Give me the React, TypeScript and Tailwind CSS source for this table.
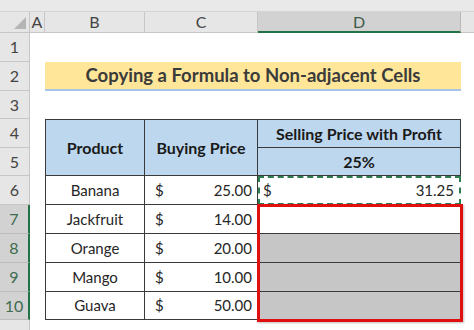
import React from "react";

const font = { fontFamily: "Lato, 'Noto Sans', sans-serif" };

const rows = [
  { name: "Banana", price: "25.00" },
  { name: "Jackfruit", price: "14.00" },
  { name: "Orange", price: "20.00" },
  { name: "Mango", price: "10.00" },
  { name: "Guava", price: "50.00" },
];

const rowStarts = [
  "row-start-3",
  "row-start-4",
  "row-start-5",
  "row-start-6",
  "row-start-7",
  "row-start-8",
  "row-start-9",
  "row-start-10",
  "row-start-11",
  "row-start-12",
];

const dataRowStarts = ["row-start-8", "row-start-9", "row-start-10", "row-start-11", "row-start-12"];

export default function App() {
  return (
    <div
      className="w-[474px] h-[330px] overflow-hidden bg-white text-[#262626] grid grid-cols-[30px_15px_100px_113px_203px_1fr] grid-rows-[12px_21px_29px_29px_28px_29px_28px_29px_29px_29px_29px_28px_1fr]"
      style={font}
    >
      {/* top strip */}
      <div className="col-span-6 row-start-1 bg-[#e9e9e9] border-b border-[#d4d4d4]" />

      {/* corner */}
      <div className="col-start-1 row-start-2 bg-[#e6e6e6] border-r border-b border-[#c6c6c6] flex items-end justify-end p-[3px]">
        <svg width="12" height="12" viewBox="0 0 12 12">
          <polygon points="12,0 12,12 0,12" fill="#b5b5b5" />
        </svg>
      </div>

      {/* column headers */}
      <div className="col-start-2 row-start-2 bg-[#e6e6e6] border-r border-b border-[#c6c6c6] flex items-center justify-center text-[16px] text-[#444]">A</div>
      <div className="col-start-3 row-start-2 bg-[#e6e6e6] border-r border-b border-[#c6c6c6] flex items-center justify-center text-[16px] text-[#444]">B</div>
      <div className="col-start-4 row-start-2 bg-[#e6e6e6] border-r border-b border-[#c6c6c6] flex items-center justify-center text-[16px] text-[#444]">C</div>
      <div className="col-start-5 row-start-2 bg-[#d2d2d2] border-r border-[#b8b8b8] border-b-2 border-b-[#217346] flex items-center justify-center text-[16px] text-[#3d5a48]">D</div>
      <div className="col-start-6 row-start-2 bg-[#e6e6e6] border-b border-[#c6c6c6]" />

      {/* row headers */}
      {rowStarts.map((r, i) => {
        const sel = i >= 6;
        return (
          <div
            key={r}
            className={`col-start-1 ${r} flex items-center justify-center text-[16px] border-b ${
              sel
                ? "bg-[#d2d2d2] text-[#3d6b4f] border-[#bcbcbc] border-r-2 border-r-[#217346]"
                : "bg-[#e6e6e6] text-[#444] border-[#c6c6c6] border-r"
            }`}
          >
            {i + 1}
          </div>
        );
      })}
      <div className="col-start-1 row-start-13 bg-[#e6e6e6] border-r border-[#c6c6c6]" />

      {/* title */}
      <div className="col-start-3 col-span-3 row-start-4 bg-[#ffe699] border-b-2 border-[#a9c4e4] flex items-center justify-center text-[18.5px] font-bold text-[#3b3b3b]">
        Copying a Formula to Non-adjacent Cells
      </div>

      {/* table headers */}
      <div className="col-start-3 row-start-6 row-span-2 bg-[#bdd7ee] border border-[#3a3a3a] flex items-center justify-center text-[16px] font-bold text-[#1a1a1a]">
        Product
      </div>
      <div className="col-start-4 row-start-6 row-span-2 bg-[#bdd7ee] border-y border-r border-[#3a3a3a] flex items-center justify-center text-[16px] font-bold text-[#1a1a1a]">
        Buying Price
      </div>
      <div className="col-start-5 row-start-6 bg-[#bdd7ee] border-y border-r border-[#3a3a3a] flex items-center justify-center text-[16px] font-bold text-[#1a1a1a]">
        Selling Price with Profit
      </div>
      <div className="col-start-5 row-start-7 bg-[#bdd7ee] border-b border-r border-[#3a3a3a] flex items-center justify-center text-[16px] font-bold text-[#1a1a1a]">
        25%
      </div>

      {/* data */}
      {rows.map((row, i) => (
        <React.Fragment key={row.name}>
          <div className={`col-start-3 ${dataRowStarts[i]} border-x border-b border-[#3a3a3a] flex items-center justify-center text-[15px]`}>
            {row.name}
          </div>
          <div className={`col-start-4 ${dataRowStarts[i]} border-r border-b border-[#3a3a3a] flex items-center justify-between pl-[10px] pr-[5px] text-[15px]`}>
            <span>$</span>
            <span>{row.price}</span>
          </div>
          {i === 0 ? (
            <div className="col-start-5 row-start-8 border-2 border-dashed border-[#2e7d4f] flex items-center justify-between pl-[3px] pr-[5px] text-[15px]">
              <span>$</span>
              <span>31.25</span>
            </div>
          ) : (
            <div
              className={`col-start-5 ${dataRowStarts[i]} border-b border-[#3a3a3a] ${
                i === 1 ? "bg-white" : "bg-[#c6c6c6]"
              }`}
            />
          )}
        </React.Fragment>
      ))}

      {/* selection range */}
      <div className="col-start-5 row-start-9 row-span-4 border-[3px] border-[#e01010] -ml-[1px] -mr-[2px] -mt-[1px] -mb-[2px] shadow-[1px_1px_2px_rgba(0,0,0,0.25)]" />
    </div>
  );
}
